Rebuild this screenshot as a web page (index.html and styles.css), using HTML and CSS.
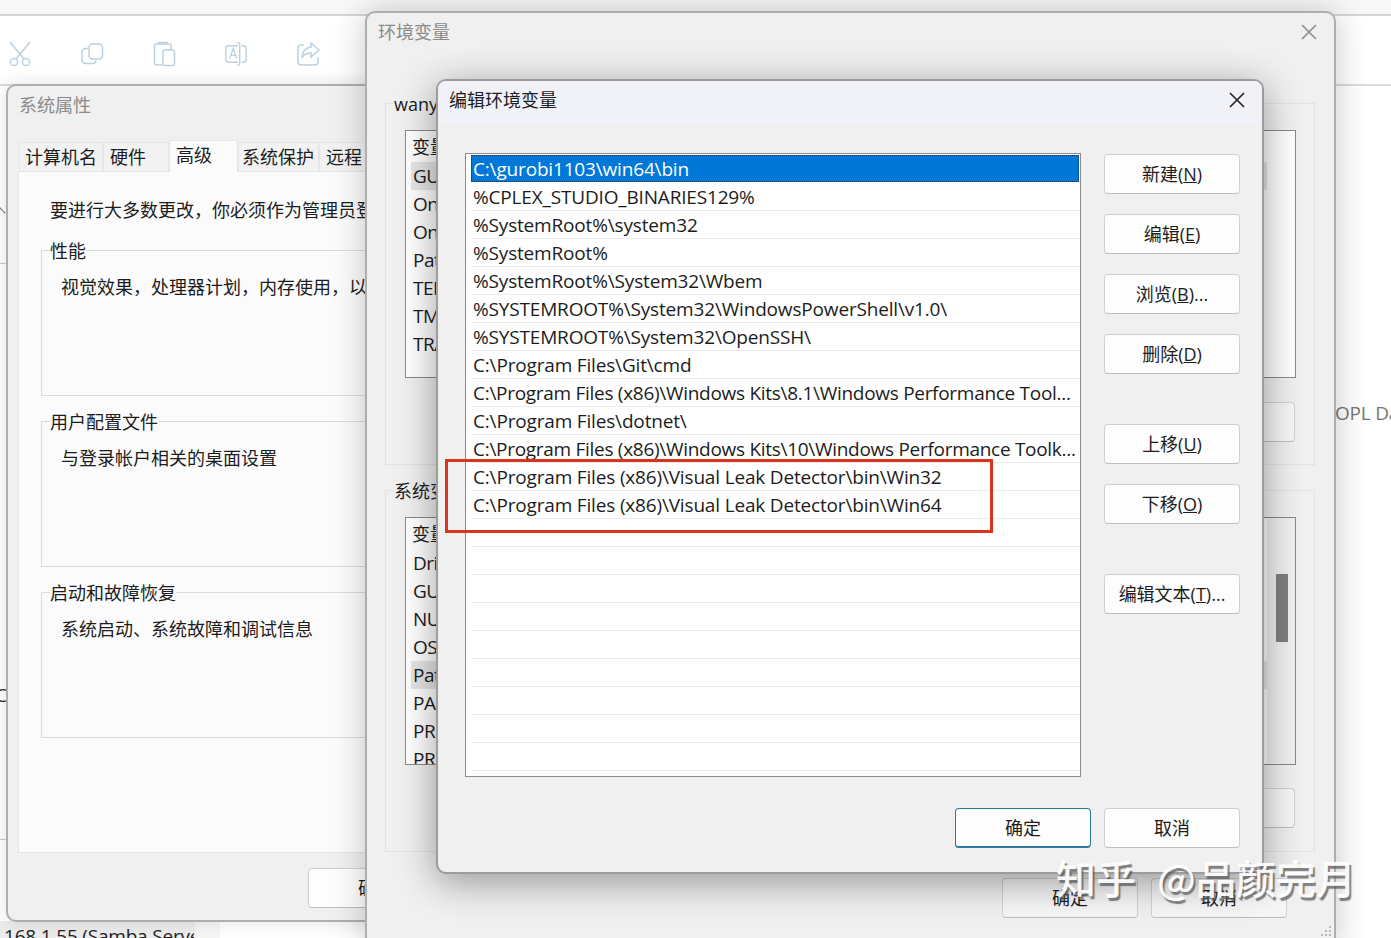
FILE: index.html
```html
<!DOCTYPE html>
<html lang="zh-CN">
<head>
<meta charset="utf-8">
<title>编辑环境变量</title>
<link rel="stylesheet" href="styles.css">
</head>
<body>
<div class="desktop">
  <div class="top-strip"></div>
  <div class="toolbar">
    <svg class="tool" viewBox="0 0 24 26"><circle cx="6" cy="21" r="3.6"/><circle cx="18" cy="21" r="3.6"/><path d="M2 1l14 17M22 1L8 18"/></svg>
    <svg class="tool" viewBox="0 0 24 26"><rect x="9" y="3" width="13.5" height="15" rx="3.5"/><path d="M8 7.500H5.500A3.500 3.500 0 0 0 2 11v8a3.500 3.500 0 0 0 3.500 3.500h7A3.500 3.500 0 0 0 16 19.500"/></svg>
    <svg class="tool" viewBox="0 0 24 26"><path d="M10 24H4.500A2 2 0 0 1 2.500 22V5A2 2 0 0 1 4.500 3H17A2 2 0 0 1 19 5V9"/><path d="M7 3V1.500h8V3"/><rect x="11" y="9" width="11.500" height="15.500" rx="2"/></svg>
    <svg class="tool" viewBox="0 0 26 26"><path d="M15 4H5A3 3 0 0 0 2 7v12a3 3 0 0 0 3 3h10M19 4h2a3 3 0 0 1 3 3v12a3 3 0 0 1-3 3h-2M14 1h3M17 1v24M14 25h3"/><path d="M6 18l4-11 4 11M7.500 14.500h5"/></svg>
    <svg class="tool" viewBox="0 0 24 26"><path d="M8 4H5A3 3 0 0 0 2 7v14a3 3 0 0 0 3 3h14a3 3 0 0 0 3-3v-5"/><path d="M15 2l8 7-8 7v-4c-4 0-7 1-9 5 0-6 3-10 9-11z"/></svg>
  </div>
  <div class="behind behind-caret"></div>
  <div class="behind behind-rule-a"></div>
  <div class="behind behind-rule-b"></div>
  <div class="behind behind-letter">C</div>
  <div class="behind behind-opl">OPL Da</div>
  <div class="behind behind-status"><span class="status-text">168.1.55 (Samba Serve</span></div>

  <section class="window win-system">
    <div class="win-title">系统属性</div>
    <div class="tabs">
      <div class="tab tab-a">计算机名</div>
      <div class="tab tab-b">硬件</div>
      <div class="tab tab-c">高级</div>
      <div class="tab tab-d">系统保护</div>
      <div class="tab tab-e">远程</div>
    </div>
    <div class="tab-panel">
      <p class="panel-note">要进行大多数更改，你必须作为管理员登录。</p>
      <div class="sys-group">
        <div class="group-label">性能</div>
        <p class="group-desc">视觉效果，处理器计划，内存使用，以及虚拟内存</p>
      </div>
      <div class="sys-group">
        <div class="group-label">用户配置文件</div>
        <p class="group-desc">与登录帐户相关的桌面设置</p>
      </div>
      <div class="sys-group">
        <div class="group-label">启动和故障恢复</div>
        <p class="group-desc">系统启动、系统故障和调试信息</p>
      </div>
    </div>
    <div class="sys-footer"><button class="btn">确定</button></div>
  </section>

  <section class="window win-env">
    <div class="win-title env-title">
      <span>环境变量</span>
      <svg class="close close-dim" viewBox="0 0 16 16"><path d="M1 1l14 14M15 1L1 15"/></svg>
    </div>
    <div class="env-group">
      <div class="group-label env-label">wany</div>
      <div class="var-list">
        <div class="var-rows">
          <div class="var-row var-head">变量</div>
          <div class="var-row var-hl">GU</div>
          <div class="var-row">On</div>
          <div class="var-row">On</div>
          <div class="var-row">Pat</div>
          <div class="var-row">TEM</div>
          <div class="var-row">TMP</div>
          <div class="var-row">TRA</div>
        </div>
        <div class="scroll-blank"></div>
      </div>
      <div class="env-actions"><button class="btn btn-dim">删除</button></div>
    </div>
    <div class="env-group env-group-sys">
      <div class="group-label env-label">系统变量</div>
      <div class="var-list">
        <div class="var-rows">
          <div class="var-row var-head">变量</div>
          <div class="var-row">Dri</div>
          <div class="var-row">GU</div>
          <div class="var-row">NU</div>
          <div class="var-row">OS</div>
          <div class="var-row var-hl">Pat</div>
          <div class="var-row">PA</div>
          <div class="var-row">PR</div>
          <div class="var-row">PR</div>
        </div>
        <div class="scrollbar"><div class="thumb"></div></div>
      </div>
      <div class="env-actions env-actions-sys"><button class="btn btn-dim">删除</button></div>
    </div>
    <div class="env-footer">
      <button class="btn btn-dim">确定</button>
      <button class="btn btn-dim">取消</button>
    </div>
    <svg class="grip" viewBox="0 0 12 12"><path d="M9 1h2v2H9zM5 5h2v2H5zM9 5h2v2H9zM1 9h2v2H1zM5 9h2v2H5zM9 9h2v2H9z"/></svg>
  </section>

  <section class="window win-edit">
    <div class="edit-title">
      <span class="edit-title-text">编辑环境变量</span>
      <svg class="close" viewBox="0 0 16 16"><path d="M1 1l14 14M15 1L1 15"/></svg>
    </div>
    <div class="edit-body">
      <div class="path-list">
        <div class="path-row path-selected">C:\gurobi1103\win64\bin</div>
        <div class="path-row">%CPLEX_STUDIO_BINARIES129%</div>
        <div class="path-row">%SystemRoot%\system32</div>
        <div class="path-row">%SystemRoot%</div>
        <div class="path-row">%SystemRoot%\System32\Wbem</div>
        <div class="path-row">%SYSTEMROOT%\System32\WindowsPowerShell\v1.0\</div>
        <div class="path-row">%SYSTEMROOT%\System32\OpenSSH\</div>
        <div class="path-row">C:\Program Files\Git\cmd</div>
        <div class="path-row path-long">C:\Program Files (x86)\Windows Kits\8.1\Windows Performance Tool...</div>
        <div class="path-row">C:\Program Files\dotnet\</div>
        <div class="path-row path-long">C:\Program Files (x86)\Windows Kits\10\Windows Performance Toolk...</div>
        <div class="path-row">C:\Program Files (x86)\Visual Leak Detector\bin\Win32</div>
        <div class="path-row">C:\Program Files (x86)\Visual Leak Detector\bin\Win64</div>
        <div class="path-row"></div>
        <div class="path-row"></div>
        <div class="path-row"></div>
        <div class="path-row"></div>
        <div class="path-row"></div>
        <div class="path-row"></div>
        <div class="path-row"></div>
        <div class="path-row"></div>
        <div class="path-row"></div>
      </div>
      <div class="edit-actions">
        <button class="btn">新建(<u>N</u>)</button>
        <button class="btn">编辑(<u>E</u>)</button>
        <button class="btn">浏览(<u>B</u>)...</button>
        <button class="btn">删除(<u>D</u>)</button>
        <button class="btn btn-gap">上移(<u>U</u>)</button>
        <button class="btn">下移(<u>O</u>)</button>
        <button class="btn btn-gap">编辑文本(<u>T</u>)...</button>
      </div>
    </div>
    <div class="edit-footer">
      <button class="btn btn-default">确定</button>
      <button class="btn">取消</button>
    </div>
  </section>

  <div class="red-box"></div>
  <div class="watermark">知乎 @品颜完月</div>
</div>
</body>
</html>
```
FILE: styles.css
```css
* { box-sizing: border-box; }
html, body { margin: 0; padding: 0; }
body {
  font-family: "Open Sans", "Noto Sans CJK SC", sans-serif;
  font-size: 18px;
  color: #1c1c1c;
  background: #fff;
}
p { margin: 0; }

.desktop {
  position: relative;
  width: 1391px;
  height: 938px;
  overflow: hidden;
  background: #fff;
}
.top-strip {
  height: 16px;
  background: #f8f8f8;
  border-bottom: 2px solid #d6d6d6;
}
.toolbar {
  height: 70px;
  display: flex;
  align-items: flex-start;
  gap: 48px;
  padding: 25px 0 0 8px;
  border-bottom: 2px solid #dcdcdc;
}
.tool {
  width: 24px;
  height: 26px;
  fill: none;
  stroke: #bcd0de;
  stroke-width: 1.5;
}

.behind { position: absolute; color: #666; }
.behind-caret {
  left: -4px; top: 209px; width: 8px; height: 8px;
  border-top: 1px solid #777; border-right: 1px solid #777;
  transform: rotate(-45deg);
}
.behind-rule-a { left: 0; top: 263px; width: 8px; height: 1px; background: #ccc; }
.behind-rule-b { left: 0; top: 839px; width: 8px; height: 1px; background: #ccc; }
.behind-letter { left: -5px; top: 682px; font-size: 19px; line-height: 26px; color: #333; }
.behind-opl { left: 1335px; top: 400px; width: 70px; font-size: 19px; line-height: 26px; color: #777; white-space: nowrap; letter-spacing: -.2px; }
.behind-status {
  left: 0; top: 921px; width: 220px; height: 17px;
  background: #ececec;
  border-right: 25px solid #f6f6f6;
  overflow: hidden;
}
.status-text {
  display: block;
  width: 194px;
  padding-left: 4px;
  overflow: hidden;
  white-space: nowrap;
  font-size: 19px;
  line-height: 30px;
  letter-spacing: -.2px;
  color: #222;
}

.window {
  position: absolute;
  background: #f0f0f0;
  border: 2px solid #aeaeae;
  border-radius: 10px;
  overflow: hidden;
}
.win-system {
  left: 6px; top: 84px; width: 800px; height: 838px;
  box-shadow: 0 0 18px rgba(0, 0, 0, .12);
}
.win-env {
  left: 365px; top: 11px; width: 971px; height: 940px;
  overflow: visible;
  box-shadow: 0 0 34px rgba(0, 0, 0, .22);
}
.win-edit {
  left: 436px; top: 79px; width: 828px; height: 795px;
  border-color: #9c9c9c;
  overflow: visible;
  box-shadow: 0 8px 38px rgba(0, 0, 0, .38);
}

.win-title {
  height: 38px;
  padding-left: 11px;
  margin-bottom: 18px;
  line-height: 38px;
  color: #8a8a8a;
}

.tabs {
  display: flex;
  align-items: flex-end;
  height: 29px;
  margin-left: 11px;
}
.tab {
  height: 29px;
  line-height: 28px;
  background: #f2f2f2;
  border: 1px solid #e6e6e6;
  border-bottom: 0;
  white-space: nowrap;
  padding-left: 5px;
}
.tab-a { width: 84px; }
.tab-b { width: 66px; padding-left: 6px; }
.tab-c {
  width: 69px;
  height: 32px;
  padding-left: 6px;
  line-height: 28px;
  background: #fbfbfb;
  margin-bottom: -1px;
  position: relative;
  z-index: 1;
}
.tab-d { width: 81px; padding-left: 3px; }
.tab-e { width: 70px; padding-left: 6px; }

.tab-panel {
  height: 682px;
  margin-left: 10px;
  width: 770px;
  padding: 26px 0 0 22px;
  background: #fbfbfb;
  border: 1px solid #e4e4e4;
  white-space: nowrap;
}
.panel-note { line-height: 24px; padding-left: 9px; margin-bottom: 28px; }
.sys-group {
  height: 146px;
  margin-bottom: 25px;
  padding-left: 8px;
  border: 1px solid #dadada;
}
.group-label {
  width: fit-content;
  height: 24px;
  line-height: 24px;
  margin-top: -12px;
  background: #fbfbfb;
}
.group-desc { line-height: 24px; margin-top: 12px; padding-left: 11px; }
.sys-footer { padding: 15px 0 0 300px; }

.btn {
  display: block;
  width: 136px;
  height: 40px;
  padding: 0 0 2px;
  font: inherit;
  color: #1c1c1c;
  background: #fdfdfd;
  border: 1px solid #d0d0d0;
  border-bottom-color: #bdbdbd;
  border-radius: 4px;
}
.btn-dim { background: #f6f6f6; }
.btn-default { border: 1px solid #2a7a9c; border-bottom-width: 2px; }

.env-title {
  display: flex;
  justify-content: space-between;
  align-items: center;
  height: 38px;
  margin-bottom: 52px;
  padding-right: 17px;
}
.env-group {
  height: 362px;
  margin-left: 18px;
  width: 930px;
  padding: 0 18px 0 19px;
  border: 1px solid #e2e2e2;
}
.env-group-sys { margin-top: 25px; }
.env-label { margin-top: -12px; margin-left: -11px; background: #f0f0f0; }
.var-list {
  display: flex;
  height: 248px;
  margin-top: 14px;
  background: #fff;
  border: 1px solid #8a8a8a;
  overflow: hidden;
}
.var-rows { flex: 1; padding: 3px 0 0 5px; }
.var-row {
  height: 28px;
  line-height: 28px;
  padding-left: 2px;
  font-size: 19px;
  letter-spacing: -.5px;
  white-space: nowrap;
}
.var-head { line-height: 26px; padding-left: 1px; letter-spacing: 0; font-size: 18px; }
.var-hl { background: #e6e6e6; }
.scroll-blank { width: 28px; }
.scrollbar {
  width: 28px;
  padding: 56px 7px 0 9px;
  background: #f0f0f0;
}
.thumb { height: 68px; background: #808080; }
.env-actions { display: flex; justify-content: flex-end; margin: 24px 1px 0 0; }
.env-actions-sys { margin-top: 23px; }
.env-footer {
  display: flex;
  justify-content: flex-end;
  gap: 13px;
  margin-top: 26px;
  padding-right: 47px;
}
.grip {
  position: absolute;
  right: 2px;
  top: 912px;
  width: 12px;
  height: 12px;
  fill: #b8b8b8;
}

.close {
  width: 16px;
  height: 16px;
  fill: none;
  stroke: #222;
  stroke-width: 1.6;
}
.close-dim { stroke: #8e8e8e; }

.edit-title {
  display: flex;
  justify-content: space-between;
  align-items: center;
  height: 43px;
  padding: 0 17px 6px 11px;
  background: #f0f2f8;
  border-radius: 8px 8px 0 0;
}
.edit-title-text { margin-top: -2px; }
.edit-body {
  display: flex;
  align-items: flex-start;
  gap: 23px;
  padding: 29px 0 0 27px;
}
.path-list {
  width: 616px;
  height: 624px;
  padding: 1px 1px 0 5px;
  background: #fff;
  border: 1px solid #8c8c8c;
  overflow: hidden;
}
.path-row {
  height: 28px;
  line-height: 28px;
  padding-left: 2px;
  font-size: 19px;
  letter-spacing: -.17px;
  white-space: nowrap;
  border-bottom: 1px solid #ececec;
  margin-right: -1px;
}
.path-long { letter-spacing: -.29px; }
.path-selected {
  color: #fff;
  background: #0078d7;
  outline: 1px dotted #12365a;
  outline-offset: -1px;
  border-bottom: 0;
  margin-right: 0;
  height: 27px;
  margin-bottom: 1px;
}
.edit-actions {
  display: flex;
  flex-direction: column;
  gap: 20px;
  padding-top: 1px;
}
.btn-gap { margin-top: 30px; }
.edit-footer {
  display: flex;
  justify-content: flex-end;
  gap: 13px;
  margin-top: 31px;
  padding-right: 22px;
}

.red-box {
  position: absolute;
  left: 445px;
  top: 459px;
  width: 548px;
  height: 74px;
  border: 3px solid #d8361c;
}
.watermark {
  position: absolute;
  left: 1056px;
  top: 851px;
  font-size: 40px;
  font-weight: 500;
  word-spacing: 12px;
  line-height: 52px;
  white-space: nowrap;
  font-family: "Noto Sans CJK SC", sans-serif;
  color: rgba(255, 255, 255, .94);
  text-shadow: 2px 3px 1px rgba(90, 90, 90, .75);
}
```
